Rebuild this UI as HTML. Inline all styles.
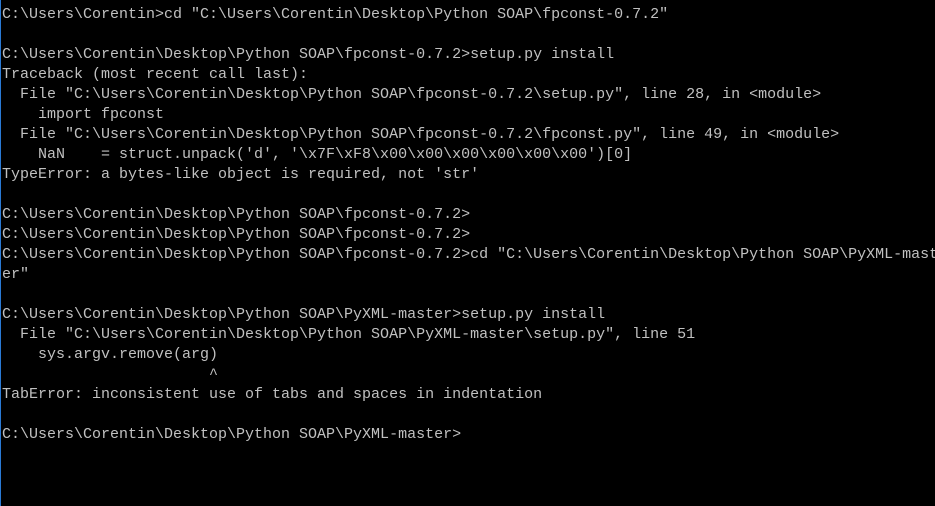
<!DOCTYPE html>
<html><head><style>
html,body{margin:0;padding:0;width:935px;height:506px;overflow:hidden;background:#000;}
body{border-left:1px solid #2a7ad5;box-sizing:border-box;}
pre{margin:0;padding:5px 0 0 1px;font-family:"Liberation Mono",monospace;font-size:15px;line-height:20px;color:#c0c0c0;white-space:pre;}
</style></head><body><pre>C:\Users\Corentin&gt;cd "C:\Users\Corentin\Desktop\Python SOAP\fpconst-0.7.2"

C:\Users\Corentin\Desktop\Python SOAP\fpconst-0.7.2&gt;setup.py install
Traceback (most recent call last):
  File "C:\Users\Corentin\Desktop\Python SOAP\fpconst-0.7.2\setup.py", line 28, in &lt;module&gt;
    import fpconst
  File "C:\Users\Corentin\Desktop\Python SOAP\fpconst-0.7.2\fpconst.py", line 49, in &lt;module&gt;
    NaN    = struct.unpack('d', '\x7F\xF8\x00\x00\x00\x00\x00\x00')[0]
TypeError: a bytes-like object is required, not 'str'

C:\Users\Corentin\Desktop\Python SOAP\fpconst-0.7.2&gt;
C:\Users\Corentin\Desktop\Python SOAP\fpconst-0.7.2&gt;
C:\Users\Corentin\Desktop\Python SOAP\fpconst-0.7.2&gt;cd "C:\Users\Corentin\Desktop\Python SOAP\PyXML-mast
er"

C:\Users\Corentin\Desktop\Python SOAP\PyXML-master&gt;setup.py install
  File "C:\Users\Corentin\Desktop\Python SOAP\PyXML-master\setup.py", line 51
    sys.argv.remove(arg)
                       ^
TabError: inconsistent use of tabs and spaces in indentation

C:\Users\Corentin\Desktop\Python SOAP\PyXML-master&gt;</pre></body></html>
